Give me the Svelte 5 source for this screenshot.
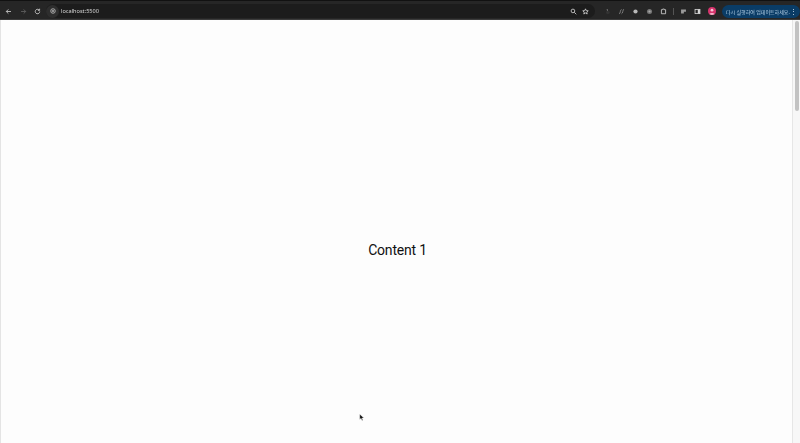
<script lang="ts">
  const url = "localhost:5500";
  const updateLabel = "다시 실행하여 업데이트하세요.";
</script>

<div class="window">
  <header class="toolbar">
    <div class="nav">
      <svg class="icon" viewBox="0 0 10 10">
        <path d="M8.5 5H2M4.8 2 1.8 5l3 3" class="line" />
      </svg>
      <svg class="icon dim" viewBox="0 0 10 10">
        <path d="M1.5 5H8M5.2 2l3 3-3 3" class="line" />
      </svg>
      <svg class="icon" viewBox="0 0 10 10">
        <path d="M8.2 5A3.2 3.2 0 1 1 7.2 2.7M8 1v2.4H5.6" class="line" />
      </svg>
    </div>

    <div class="omnibox">
      <span class="site-chip">
        <svg class="icon small" viewBox="0 0 10 10">
          <circle cx="5" cy="5" r="3.8" class="line" />
          <circle cx="5" cy="5" r="1.3" class="line" />
        </svg>
      </span>
      <span class="url">{url}</span>
      <div class="omni-actions">
        <svg class="icon" viewBox="0 0 10 10">
          <circle cx="4.2" cy="4.2" r="2.6" class="line" />
          <path d="M6.2 6.2 9 9" class="line" />
        </svg>
        <svg class="icon" viewBox="0 0 10 10">
          <path d="M5 1.2 6.1 3.8 8.9 4 6.8 5.8 7.4 8.6 5 7.1 2.6 8.6 3.2 5.8 1.1 4 3.9 3.8Z" class="line" />
        </svg>
      </div>
    </div>

    <div class="extensions">
      <svg class="icon" viewBox="0 0 10 10">
        <circle cx="5.5" cy="6.4" r="2.6" fill="#333" />
        <path d="M4.5 1.5 5 4" class="line faint" />
      </svg>
      <svg class="icon" viewBox="0 0 10 10">
        <path d="M1.5 8.5C3.5 8.5 3.2 2 5 2M5 8.2C7 8.2 6.8 1.6 8.5 1.6" class="line faint" />
      </svg>
      <svg class="icon" viewBox="0 0 10 10">
        <circle cx="5" cy="5" r="3" fill="#b9b9b9" />
      </svg>
      <svg class="icon" viewBox="0 0 10 10">
        <circle cx="5" cy="5" r="3.6" fill="#777" />
        <circle cx="5" cy="5" r="1.6" fill="#aaa" />
      </svg>
      <svg class="icon" viewBox="0 0 10 10">
        <path d="M2 2.4h1.8V1.5h2.4v.9H8v5.8H2Z" class="line" />
      </svg>
      <span class="divider"></span>
      <svg class="icon" viewBox="0 0 10 10">
        <path d="M1.5 2h7v3.5h-3V8h-4Z" fill="#9a9a9a" />
      </svg>
      <svg class="icon" viewBox="0 0 10 10">
        <rect x="1.5" y="2" width="7" height="6" class="line" />
        <rect x="5.4" y="2" width="3.1" height="6" fill="#d8d8d8" />
      </svg>
      <svg class="avatar" viewBox="0 0 10 10">
        <circle cx="5" cy="5" r="5" fill="#d6336c" />
        <circle cx="5" cy="4" r="1.7" fill="#f6c6d6" />
        <path d="M1.8 9C2.4 6.8 7.6 6.8 8.2 9L5 10Z" fill="#f3b4ca" />
      </svg>
      <button class="update">
        <span class="update-label">{updateLabel}</span>
        <span class="kebab">⋮</span>
      </button>
    </div>
  </header>

  <div class="viewport">
    <main class="page">
      <p class="content">Content 1</p>
    </main>
    <aside class="scrollbar">
      <div class="thumb"></div>
    </aside>

    <svg class="cursor" viewBox="0 0 8 11">
      <path d="M1 1v7l1.8-1.5L4 9.5l1.2-.5L4 6.2h2.4Z" fill="#111" stroke="#fff" stroke-width="0.4" />
    </svg>
  </div>
</div>

<style>
  :global(body) {
    margin: 0;
    background: #fdfdfd;
  }

  .window {
    width: 800px;
    height: 443px;
    display: flex;
    flex-direction: column;
    overflow: hidden;
    font-family: "Noto Sans", "Noto Sans CJK KR", sans-serif;
  }

  .toolbar {
    height: 16px;
    flex-shrink: 0;
    display: flex;
    align-items: center;
    gap: 6px;
    padding: 2px 0 0 3px;
    background: #262626;
    border-top: 1px solid #111;
    border-bottom: 1px solid #3c3c3c;
    filter: blur(0.3px);
  }

  .nav {
    display: flex;
    align-items: center;
    gap: 7.5px;
    padding-left: 2px;
  }

  .icon {
    width: 7px;
    height: 7px;
    flex-shrink: 0;
  }

  .icon.small {
    width: 6px;
    height: 6px;
  }

  .icon.dim {
    opacity: 0.35;
  }

  .line {
    fill: none;
    stroke: #d0d0d0;
    stroke-width: 1.2;
  }

  .line.faint {
    stroke: #8a8a8a;
  }

  .omnibox {
    flex: 1;
    height: 14px;
    margin-left: -1px;
    display: flex;
    align-items: center;
    gap: 2px;
    background: #1c1c1c;
    border-radius: 7px;
  }

  .site-chip {
    width: 13px;
    height: 13px;
    display: flex;
    align-items: center;
    justify-content: center;
    background: #2e2e2e;
    border-radius: 50%;
  }

  .url {
    font-size: 5.6px;
    color: #d4d4d4;
  }

  .omni-actions {
    margin-left: auto;
    display: flex;
    align-items: center;
    gap: 5px;
    padding-right: 6px;
  }

  .extensions {
    display: flex;
    align-items: center;
    gap: 7px;
    padding-left: 3px;
  }

  .divider {
    width: 1px;
    height: 7px;
    background: #555;
    margin: 0 -1px;
  }

  .avatar {
    width: 8px;
    height: 8px;
    flex-shrink: 0;
  }

  .update {
    height: 13px;
    width: 78px;
    margin-left: -1px;
    padding: 0 6px 0 4px;
    display: flex;
    align-items: center;
    justify-content: space-between;
    border: 0;
    border-radius: 7px;
    background: #0a3c66;
    color: #b9d4ea;
    font-family: inherit;
  }

  .update-label {
    font-size: 5px;
    white-space: nowrap;
  }

  .kebab {
    font-size: 7px;
    color: #d5e4f0;
    line-height: 1;
  }

  .viewport {
    flex: 1;
    position: relative;
    display: flex;
    min-height: 0;
  }

  .page {
    flex: 1;
    display: flex;
    align-items: center;
    justify-content: center;
    padding-left: 2px;
    background: #fdfdfd;
    border-left: 1px solid #e4e4e4;
  }

  .content {
    margin: 0 0 -36px;
    font-family: Roboto, "Noto Sans CJK KR", sans-serif;
    font-size: 14px;
    letter-spacing: -0.2px;
    color: #111;
  }

  .scrollbar {
    width: 8px;
    flex-shrink: 0;
    padding: 1px 1px 0 2px;
    box-sizing: border-box;
    background: #f7f7f7;
    border-left: 1px solid #e6e6e6;
  }

  .thumb {
    height: 90px;
    background: #c2c2c2;
    border-radius: 2px;
  }

  .cursor {
    position: absolute;
    left: 358.5px;
    top: 393px;
    width: 6px;
    height: 9px;
  }
</style>
